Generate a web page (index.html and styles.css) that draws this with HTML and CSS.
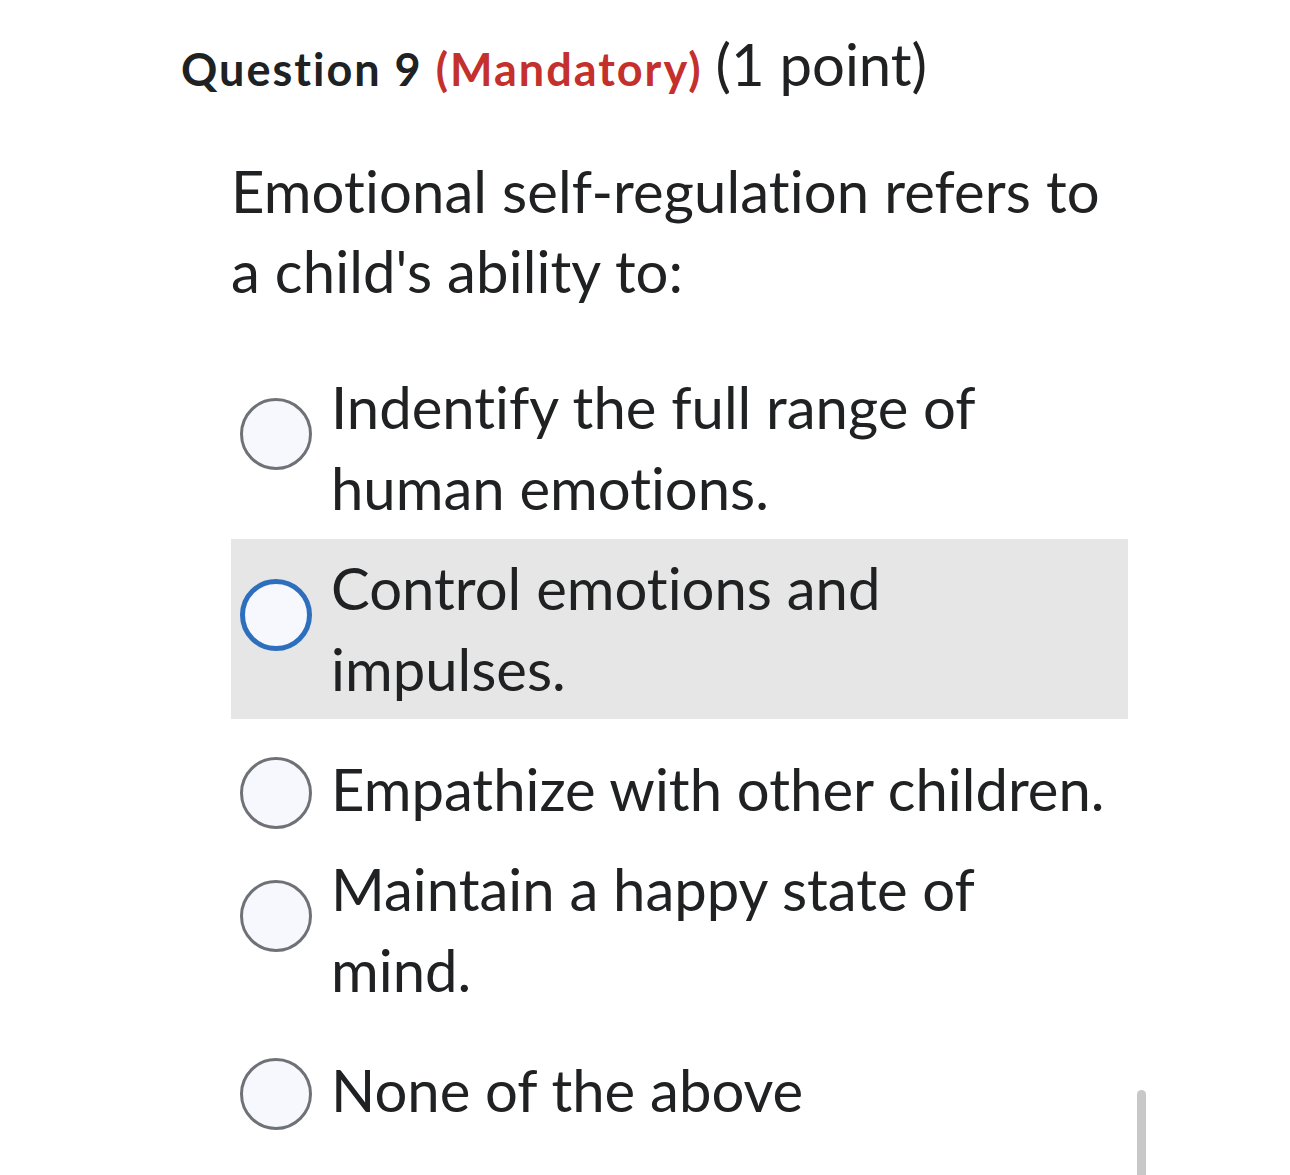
FILE: index.html
```html
<!DOCTYPE html>
<html lang="en">
<head>
<meta charset="utf-8">
<title>Question 9</title>
<link rel="stylesheet" href="styles.css">
</head>
<body>
<main class="page">
  <h2 class="title">Question 9 <span class="mandatory">(Mandatory)</span> <span class="points">(1 point)</span></h2>
  <section class="question">
    <p class="prompt">Emotional self-regulation refers to a child's ability to:</p>
    <div class="choices">
      <label class="choice">
        <span class="radio"></span>
        <span class="choice-text">Indentify the full range of human emotions.</span>
      </label>
      <label class="choice choice-hover">
        <span class="radio radio-focus"></span>
        <span class="choice-text">Control emotions and impulses.</span>
      </label>
      <label class="choice choice-single choice-spaced">
        <span class="radio"></span>
        <span class="choice-text">Empathize with other children.</span>
      </label>
      <label class="choice">
        <span class="radio"></span>
        <span class="choice-text">Maintain a happy state of mind.</span>
      </label>
      <label class="choice choice-single choice-spaced">
        <span class="radio"></span>
        <span class="choice-text">None of the above</span>
      </label>
    </div>
  </section>
  <div class="scrollbar"></div>
</main>
</body>
</html>
```
FILE: styles.css
```css
html, body {
  margin: 0;
  padding: 0;
  background: #ffffff;
}

body {
  font-family: Lato, "Open Sans", "Liberation Sans", sans-serif;
  color: #202122;
  font-variant-ligatures: none;
}

.page {
  position: relative;
  height: 1175px;
  overflow: hidden;
  padding: 34px 0 0 181px;
  box-sizing: border-box;
}

.title {
  margin: 0;
  font-size: 45px;
  line-height: 60px;
  font-weight: 700;
  letter-spacing: 2px;
  color: #202122;
}

.mandatory {
  color: #c4302b;
}

.points {
  font-weight: 400;
  font-size: 58px;
  letter-spacing: 0;
}

.question {
  margin: 52px 0 0 50px;
  width: 897px;
}

.prompt {
  margin: 0;
  font-size: 58px;
  line-height: 80px;
  letter-spacing: 0.1px;
}

.choices {
  margin-top: 47px;
  display: flex;
  flex-direction: column;
  gap: 1px;
}

.choice {
  display: flex;
  align-items: flex-start;
  padding: 8px 8px 10px 9px;
}

.choice-single {
  align-items: center;
}

.choice-spaced {
  margin-top: 20px;
}

.choice-hover {
  background: #e6e6e6;
}

.radio {
  flex: none;
  width: 72px;
  height: 72px;
  box-sizing: border-box;
  border-radius: 50%;
  border: 3px solid #6e7276;
  background: #f6f8fd;
  margin-top: 32px;
  margin-right: 19px;
}

.choice-single .radio {
  margin-top: 8px;
}

.radio-focus {
  border: 5px solid #2d6fbd;
}

.choice-text {
  font-size: 58px;
  line-height: 81px;
}

.scrollbar {
  position: absolute;
  left: 1137px;
  top: 1090px;
  width: 9px;
  height: 100px;
  border-radius: 5px 5px 0 0;
  background: #c8c8c8;
}
```
